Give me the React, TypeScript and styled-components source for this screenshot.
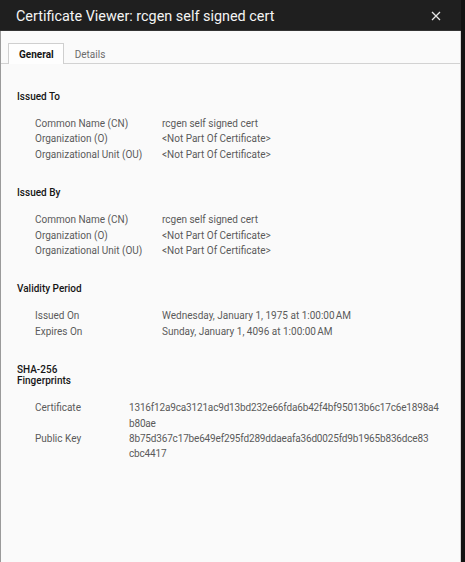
import * as React from "react";
import styled, { createGlobalStyle } from "styled-components";

const Global = createGlobalStyle`
  html, body {
    margin: 0;
    background: #121212;
  }
  body {
    font-family: Roboto, "Liberation Sans", sans-serif;
  }
`;

const Window = styled.div`
  width: 461px;
  height: 562px;
  display: flex;
  flex-direction: column;
  background: #fafafa;
  box-sizing: border-box;
  border-left: 1px solid #9a9a9a;
  border-right: 1px solid #d4d4d4;
`;

const TitleBar = styled.div`
  height: 31px;
  flex: none;
  display: flex;
  align-items: center;
  justify-content: space-between;
  background: #1f1f1f;
  color: #f4f4f4;
  font-size: 14.4px;
  padding: 2px 19px 0 16px;
  box-sizing: border-box;
  margin-left: -1px;
  margin-right: -1px;
  border-bottom: 1px solid #333;
`;

const CloseButton = styled.button`
  border: 0;
  background: none;
  padding: 0;
  width: 12px;
  height: 12px;
  display: grid;
  place-items: center;
  color: #e6e6e6;
`;

const TabStrip = styled.div`
  display: flex;
  margin-top: 12px;
  padding-left: 7px;
  border-bottom: 1px solid #d2d2d2;
  height: 20px;
`;

const Tab = styled.div<{ $active?: boolean }>`
  height: 21px;
  box-sizing: border-box;
  padding: 0 9px 0 10px;
  display: flex;
  align-items: center;
  font-size: 10px;
  font-weight: ${p => (p.$active ? 700 : 400)};
  color: ${p => (p.$active ? "#141414" : "#6b6b6b")};
  background: ${p => (p.$active ? "#fefefe" : "transparent")};
  border: 1px solid ${p => (p.$active ? "#cfcfcf" : "transparent")};
  border-bottom: 0;
`;

const Content = styled.div`
  display: flex;
  flex-direction: column;
  gap: 25px;
  padding: 27px 18px 0 16px;
`;

const Section = styled.section`
  display: flex;
  flex-direction: column;
  gap: 14px;
`;

const Heading = styled.div`
  width: 90px;
  font-size: 10px;
  line-height: 11px;
  font-weight: 500;
  color: #161616;
`;

const Fields = styled.div<{ $labelWidth: number; $hash?: boolean }>`
  display: grid;
  grid-template-columns: ${p => p.$labelWidth}px minmax(0, 1fr);
  padding-left: 18px;
  font-size: 10px;
  line-height: 15.4px;
  color: #5a5a5a;

  & > span:nth-child(even) {
    letter-spacing: ${p => (p.$hash ? "-0.17px" : "normal")};
  }
`;

const Value = styled.span`
  display: flex;
  flex-direction: column;
  white-space: nowrap;
`;

type Field = [string, string | string[]];
type SectionData = { title: string; labelWidth: number; hash?: boolean; fields: Field[] };

const notPart = "<Not Part Of Certificate>";

const sections: SectionData[] = [
  {
    title: "Issued To",
    labelWidth: 127,
    fields: [
      ["Common Name (CN)", "rcgen self signed cert"],
      ["Organization (O)", notPart],
      ["Organizational Unit (OU)", notPart],
    ],
  },
  {
    title: "Issued By",
    labelWidth: 127,
    fields: [
      ["Common Name (CN)", "rcgen self signed cert"],
      ["Organization (O)", notPart],
      ["Organizational Unit (OU)", notPart],
    ],
  },
  {
    title: "Validity Period",
    labelWidth: 127,
    fields: [
      ["Issued On", "Wednesday, January 1, 1975 at 1:00:00\u202fAM"],
      ["Expires On", "Sunday, January 1, 4096 at 1:00:00\u202fAM"],
    ],
  },
  {
    title: "SHA-256 Fingerprints",
    labelWidth: 94,
    hash: true,
    fields: [
      ["Certificate", ["1316f12a9ca3121ac9d13bd232e66fda6b42f4bf95013b6c17c6e1898a4", "b80ae"]],
      ["Public Key", ["8b75d367c17be649ef295fd289ddaeafa36d0025fd9b1965b836dce83", "cbc4417"]],
    ],
  },
];

export default function App() {
  const [tab, setTab] = React.useState("General");
  return (
    <>
      <Global />
      <Window>
        <TitleBar>
          <span>Certificate Viewer: rcgen self signed cert</span>
          <CloseButton aria-label="Close">
            <svg width="10" height="10" viewBox="0 0 10 10">
              <path d="M1 1L9 9M9 1L1 9" stroke="currentColor" strokeWidth="1.3" />
            </svg>
          </CloseButton>
        </TitleBar>
        <TabStrip>
          {["General", "Details"].map(t => (
            <Tab key={t} $active={tab === t} onClick={() => setTab(t)}>
              {t}
            </Tab>
          ))}
        </TabStrip>
        <Content>
          {sections.map(s => (
            <Section key={s.title}>
              <Heading>{s.title}</Heading>
              <Fields $labelWidth={s.labelWidth} $hash={s.hash}>
                {s.fields.map(([label, value]) => (
                  <React.Fragment key={label}>
                    <span>{label}</span>
                    <Value>
                      {(Array.isArray(value) ? value : [value]).map(line => (
                        <span key={line}>{line}</span>
                      ))}
                    </Value>
                  </React.Fragment>
                ))}
              </Fields>
            </Section>
          ))}
        </Content>
      </Window>
    </>
  );
}
